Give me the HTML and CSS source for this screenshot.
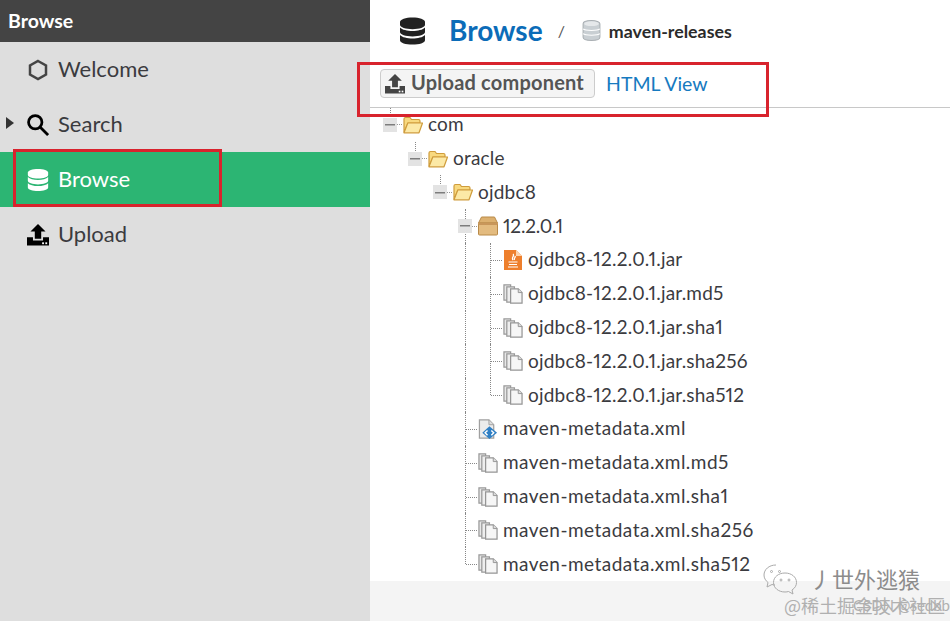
FILE: index.html
```html
<!DOCTYPE html>
<html lang="en">
<head>
<meta charset="utf-8">
<title>Browse</title>
<link rel="stylesheet" href="styles.css">
</head>
<body>
<svg class="defs" width="0" height="0" aria-hidden="true">
  <defs>
    <symbol id="db" viewBox="0 0 24 26">
      <path d="M12 0C5.500 0 0 1.800 0 4.200V7c0 2.400 5.500 4.200 12 4.200S24 9.400 24 7V4.200C24 1.800 18.500 0 12 0Z"/>
      <path d="M0 9.600V14c0 2.400 5.500 4.200 12 4.200S24 16.400 24 14V9.600c-2 2.300-7 3.300-12 3.300S2 11.900 0 9.600Z"/>
      <path d="M0 16.800V21.800C0 24.200 5.500 26 12 26s12-1.800 12-4.200v-5c-2 2.300-7 3.300-12 3.300S2 19.100 0 16.800Z"/>
    </symbol>
    <symbol id="upload" viewBox="0 0 24 24">
      <path d="M12 0 3.800 8.200H8.500V16h7V8.200h4.700Z"/>
      <path d="M0 14.500h6.500v3.500h11v-3.500H24v9H0Z"/>
      <rect x="16.500" y="20" width="2" height="2" fill="#fff"/>
      <rect x="20" y="20" width="2" height="2" fill="#fff"/>
    </symbol>
    <symbol id="folder" viewBox="0 0 20 18">
      <path d="M1 16.500V3C1 2 1.600 1.500 2.500 1.500h4.500l1.500 2h7c.8 0 1.500.6 1.500 1.500v2H5L1 16.500Z" fill="#f8d97f" stroke="#cf9c3c" stroke-width="1.200"/>
      <path d="M1 16.800 4.800 7H19.500L16 16.800Z" fill="#fce9a6" stroke="#cf9c3c" stroke-width="1.200" stroke-linejoin="round"/>
    </symbol>
    <symbol id="box" viewBox="0 0 20 20">
      <path d="M3.500 1h13L19.500 7H.5Z" fill="#dcb06f" stroke="#b98a49"/>
      <rect x=".5" y="7" width="19" height="12" rx="1" fill="#e3bb7f" stroke="#b98a49"/>
      <rect x=".5" y="6.500" width="19" height="2.500" fill="#c8965a"/>
    </symbol>
    <symbol id="jar" viewBox="0 0 20 20">
      <path d="M1 0h12l6 6v14H1Z" fill="#ee7f2c"/>
      <path d="M13 0v6h6Z" fill="#fbd3ad"/>
      <path d="M10 4c2 2-2 3.500 0 6M12 6c1 1.500-1.500 2-.5 4" stroke="#fff" stroke-width="1.300" fill="none"/>
      <path d="M5.500 12h9M6 14.500h8M5 17h10" stroke="#fff" stroke-width="1.200"/>
    </symbol>
    <symbol id="docs" viewBox="0 0 21 21">
      <path d="M1 1h7v16H1Z" fill="#e8e8e8" stroke="#999" stroke-width="1.300"/>
      <path d="M4 3h8v16H4Z" fill="#eee" stroke="#999" stroke-width="1.300"/>
      <path d="M8 5h8l4 4v11H8Z" fill="#f6f6f6" stroke="#959595" stroke-width="1.300"/>
      <path d="M16 5v4h4" fill="#ddd" stroke="#959595"/>
    </symbol>
    <symbol id="xml" viewBox="0 0 20 21">
      <path d="M1 1h10l5 5v14H1Z" fill="#ececec" stroke="#a0a0a0" stroke-width="1.300"/>
      <path d="M11 1v5h5" fill="#dedede" stroke="#a0a0a0"/>
      <path d="M11.500 7.500 19.500 14.500 11.500 21 4 14.500Z" fill="#2f7fc4"/>
      <path d="M9.500 12 7 14.500 9.500 17M13.500 12 16 14.500 13.500 17" stroke="#fff" stroke-width="1.500" fill="none"/>
    </symbol>
  </defs>
</svg>

<div class="app">
  <aside class="sidebar">
    <div class="side-title">Browse</div>
    <nav class="nav">
      <a class="nav-item">
        <svg class="nav-icon hex" viewBox="0 0 20 22"><path d="M10 2 18 6.500v9L10 20 2 15.500v-9Z"/></svg>
        <span>Welcome</span>
      </a>
      <a class="nav-item">
        <span class="caret"></span>
        <svg class="nav-icon search" viewBox="0 0 24 24"><circle cx="9" cy="9" r="7.300"/><path d="m14.500 14.500 8.500 8.500"/></svg>
        <span>Search</span>
      </a>
      <a class="nav-item active">
        <svg class="nav-icon solid"><use href="#db"/></svg>
        <span>Browse</span>
      </a>
      <a class="nav-item">
        <svg class="nav-icon solid"><use href="#upload"/></svg>
        <span>Upload</span>
      </a>
    </nav>
  </aside>

  <main class="main">
    <header class="crumbs">
      <svg class="crumb-db"><use href="#db"/></svg>
      <h1 class="crumb-title">Browse</h1>
      <span class="crumb-sep">/</span>
      <svg class="crumb-repo" viewBox="0 0 18 20">
        <path d="M9 .5C4.500.5 1 1.700 1 3.500v13c0 1.800 3.500 3 8 3s8-1.200 8-3v-13C17 1.700 13.500.5 9 .5Z" fill="#c9cfd3" stroke="#a9afb3"/>
        <ellipse cx="9" cy="3.500" rx="7" ry="2.300" fill="#e5e8ea"/>
        <path d="M1 8.500c2 2 14 2 16 0M1 13c2 2 14 2 16 0" fill="none" stroke="#fff"/>
      </svg>
      <span class="crumb-repo-name">maven-releases</span>
    </header>

    <div class="toolbar">
      <button class="btn">
        <svg class="btn-icon"><use href="#upload"/></svg>
        <span class="btn-text">Upload component</span>
      </button>
      <a class="link">HTML View</a>
    </div>

    <div class="tree">
      <div class="row"><span class="col toggle stem"></span><svg class="ico"><use href="#folder"/></svg><span class="lbl">com</span></div>
      <div class="row"><span class="col"></span><span class="col toggle stem"></span><svg class="ico"><use href="#folder"/></svg><span class="lbl">oracle</span></div>
      <div class="row"><span class="col"></span><span class="col"></span><span class="col toggle stem"></span><svg class="ico"><use href="#folder"/></svg><span class="lbl">ojdbc8</span></div>
      <div class="row"><span class="col"></span><span class="col"></span><span class="col"></span><span class="col toggle stem down"></span><svg class="ico"><use href="#box"/></svg><span class="lbl ver">12.2.0.1</span></div>
      <div class="row"><span class="col"></span><span class="col"></span><span class="col"></span><span class="col line"></span><span class="col tee"></span><svg class="ico"><use href="#jar"/></svg><span class="lbl">ojdbc8-12.2.0.1.jar</span></div>
      <div class="row"><span class="col"></span><span class="col"></span><span class="col"></span><span class="col line"></span><span class="col tee"></span><svg class="ico"><use href="#docs"/></svg><span class="lbl">ojdbc8-12.2.0.1.jar.md5</span></div>
      <div class="row"><span class="col"></span><span class="col"></span><span class="col"></span><span class="col line"></span><span class="col tee"></span><svg class="ico"><use href="#docs"/></svg><span class="lbl">ojdbc8-12.2.0.1.jar.sha1</span></div>
      <div class="row"><span class="col"></span><span class="col"></span><span class="col"></span><span class="col line"></span><span class="col tee"></span><svg class="ico"><use href="#docs"/></svg><span class="lbl">ojdbc8-12.2.0.1.jar.sha256</span></div>
      <div class="row"><span class="col"></span><span class="col"></span><span class="col"></span><span class="col line"></span><span class="col end"></span><svg class="ico"><use href="#docs"/></svg><span class="lbl">ojdbc8-12.2.0.1.jar.sha512</span></div>
      <div class="row"><span class="col"></span><span class="col"></span><span class="col"></span><span class="col tee"></span><svg class="ico"><use href="#xml"/></svg><span class="lbl meta">maven-metadata.xml</span></div>
      <div class="row"><span class="col"></span><span class="col"></span><span class="col"></span><span class="col tee"></span><svg class="ico"><use href="#docs"/></svg><span class="lbl meta">maven-metadata.xml.md5</span></div>
      <div class="row"><span class="col"></span><span class="col"></span><span class="col"></span><span class="col tee"></span><svg class="ico"><use href="#docs"/></svg><span class="lbl meta">maven-metadata.xml.sha1</span></div>
      <div class="row"><span class="col"></span><span class="col"></span><span class="col"></span><span class="col tee"></span><svg class="ico"><use href="#docs"/></svg><span class="lbl meta">maven-metadata.xml.sha256</span></div>
      <div class="row"><span class="col"></span><span class="col"></span><span class="col"></span><span class="col end"></span><svg class="ico"><use href="#docs"/></svg><span class="lbl meta">maven-metadata.xml.sha512</span></div>
    </div>
    <div class="footer"></div>
  </main>
</div>

<div class="mark mark-nav"></div>
<div class="mark mark-tools"></div>

<div class="wm">
  <svg class="wm-icon" viewBox="0 0 36 36">
    <path d="M14 3C7 3 2 7.500 2 13c0 3 1.500 5.500 4 7.500L5 25l5-2.500c1 .3 2 .4 3 .5" />
    <path d="M23 11c-6.500 0-11.500 4-11.500 9.500S16.500 30 23 30c1.500 0 2.500-.2 3.500-.5L31 32l-1-4c3-2 4.500-4.500 4.500-7.500C34.500 15 29.500 11 23 11Z"/>
    <circle cx="9.500" cy="9.500" r="1" /><circle cx="17.500" cy="9.500" r="1" /><circle cx="19" cy="18" r="1" /><circle cx="27" cy="18" r="1" />
  </svg>
  <span class="wm-name">丿世外逃猿</span>
  <span class="wm-a">@稀土掘金技术社区</span>
  <span class="wm-b">CSDN @sedbb</span>
</div>
</body>
</html>
```

FILE: styles.css
```css
* { box-sizing: border-box; }
html, body { margin: 0; height: 100%; }
body {
  font-family: Lato, "Open Sans", "Noto Sans CJK SC", sans-serif;
  font-variant-numeric: proportional-nums;
  color: #3b3b3f;
  overflow: hidden;
  background: #fff;
}
.defs { position: absolute; }

.app { display: flex; height: 621px; }

.sidebar { width: 370px; flex: none; background: #dedede; }
.side-title {
  height: 42px;
  background: #444;
  color: #fff;
  font-size: 19.500px;
  font-weight: 700;
  line-height: 42px;
  padding-left: 8px;
}
.nav-item {
  position: relative;
  display: flex;
  align-items: center;
  height: 55px;
  padding-left: 27px;
  font-size: 22px;
}
.nav-item.active { background: #2cb573; color: #fff; }
.nav-item > span:last-child { margin-left: 9px; padding-bottom: 2px; }
.nav-icon { width: 22px; height: 22px; flex: none; }
.nav-icon.solid { fill: #000; }
.active .nav-icon.solid { fill: #fff; }
.hex { fill: none; stroke: #444; stroke-width: 2.500; }
.search { fill: none; stroke: #000; stroke-width: 3; }
.caret {
  position: absolute;
  left: 6px;
  top: 20px;
  border-left: 8px solid #333;
  border-top: 6.500px solid transparent;
  border-bottom: 6.500px solid transparent;
}

.main { flex: 1; display: flex; flex-direction: column; min-width: 0; }

.crumbs {
  display: flex;
  align-items: center;
  height: 62px;
  padding-left: 30px;
}
.crumb-db { width: 25px; height: 28px; fill: #222; flex: none; }
.crumb-title {
  margin: 0 0 2px 24px;
  font-size: 28px;
  font-weight: 700;
  color: #0b6cb8;
}
.crumb-sep { margin-left: 15px; font-size: 16px; color: #555; }
.crumb-repo { width: 19px; height: 21px; margin-left: 17px; flex: none; }
.crumb-repo-name { margin-left: 8px; font-size: 17.800px; font-weight: 700; color: #2b2b2b; }

.toolbar {
  display: flex;
  align-items: center;
  height: 46px;
  padding: 0 0 1px 10px;
  border-bottom: 1px solid #c8c8c8;
}
.btn {
  display: flex;
  align-items: center;
  height: 29px;
  width: 215px;
  padding: 0 0 0 4px;
  border: 1px solid #ccc;
  border-radius: 4px;
  background: #f4f4f4;
  color: #555;
  font: 700 20px Lato, sans-serif;
  letter-spacing: .2px;
}
.btn-text { padding-bottom: 3px; }
.btn-icon { width: 20px; height: 20px; margin-right: 6px; fill: #444; }
.link { margin-left: 11px; font-size: 19.500px; color: #167ac0; padding-bottom: 1px; }

.tree { flex: 1; padding: 0 0 0 8px; }
.row { display: flex; align-items: center; height: 33.800px; font-size: 19px; letter-spacing: .2px; }
.col { position: relative; flex: none; width: 25px; height: 100%; }
.ico { width: 20px; height: 20px; flex: none; }
.lbl { margin-left: 5px; padding-bottom: 2px; white-space: nowrap; }
.lbl.meta { letter-spacing: .48px; }
.lbl.ver { letter-spacing: -.2px; }

.line::before, .tee::before, .end::before, .stem::before {
  content: "";
  position: absolute;
  left: 12px;
  border-left: 1px dotted #888;
}
.line::before, .tee::before { top: 0; bottom: 0; }
.end::before { top: 0; height: 50%; }
.stem::before { top: 0; height: 9px; }
.stem.down::before { height: 100%; }
.tee::after, .end::after {
  content: "";
  position: absolute;
  left: 13px;
  top: 50%;
  width: 11px;
  border-top: 1px dotted #888;
}
.toggle {
  background: repeating-linear-gradient(90deg, #999 0 1px, transparent 1px 2px) right 0 top 50% / 6px 1px no-repeat;
}
.toggle::after {
  content: "";
  position: absolute;
  left: 5px;
  top: 50%;
  width: 14px;
  height: 14px;
  margin-top: -7px;
  background: linear-gradient(#7d7d7d, #7d7d7d) center / 10px 1.500px no-repeat, #e3e3e3;
}

.footer { height: 40px; flex: none; background: #f4f4f4; }

.mark { position: absolute; border: 3px solid #d8232d; }
.mark-nav { left: 13px; top: 149px; width: 209px; height: 58px; }
.mark-tools { left: 357px; top: 62px; width: 412px; height: 55px; }

.wm { position: absolute; left: 760px; top: 560px; width: 190px; height: 61px; color: #9a9a9a; }
.wm-icon { position: absolute; left: 2px; top: 2px; width: 36px; height: 36px; fill: none; stroke: #aaa; stroke-width: 1; }
.wm-name { position: absolute; left: 50px; top: 2px; font: 22px "Noto Sans CJK SC", sans-serif; color: #8c8c8c; white-space: nowrap; }
.wm-a { position: absolute; left: 24px; top: 32px; font: 18px "Noto Sans CJK SC", sans-serif; color: #b0b0b0; white-space: nowrap; }
.wm-b { position: absolute; left: 93px; top: 36px; font: 15px Lato, sans-serif; color: #b0b0b0; white-space: nowrap; }
```
